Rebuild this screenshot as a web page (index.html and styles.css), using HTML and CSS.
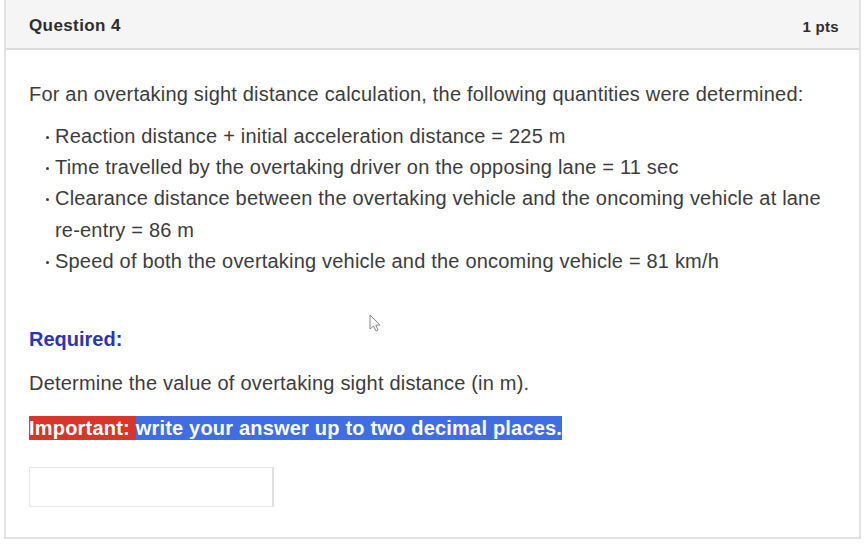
FILE: index.html
```html
<!DOCTYPE html>
<html>
<head>
<meta charset="utf-8">
<link rel="stylesheet" href="styles.css">
</head>
<body>
<div class="card">
  <div class="header">
    <span class="qtitle">Question 4</span>
    <span class="pts">1 pts</span>
  </div>
  <div class="content">
    <p class="intro">For an overtaking sight distance calculation, the following quantities were determined:</p>
    <ul class="list">
      <li>Reaction distance + initial acceleration distance = 225 m</li>
      <li>Time travelled by the overtaking driver on the opposing lane = 11 sec</li>
      <li>Clearance distance between the overtaking vehicle and the oncoming vehicle at lane re-entry = 86 m</li>
      <li>Speed of both the overtaking vehicle and the oncoming vehicle = 81 km/h</li>
    </ul>
    <p class="required">Required:</p>
    <p class="task">Determine the value of overtaking sight distance (in m).</p>
    <p class="important"><span class="red">Important: </span><span class="blue">write your answer up to two decimal places.</span></p>
    <div class="answer"></div>
  </div>
  <svg class="cursor" width="14" height="20" viewBox="0 0 14 20"><path d="M1 1 L1 15 L4.5 12 L7 17 L9 16 L6.8 11.2 L11 11 Z" fill="#fff" stroke="#888" stroke-width="1"/></svg>
</div>
</body>
</html>
```
FILE: styles.css
```css
html, body {
  margin: 0;
  padding: 0;
  background: #fff;
}
body {
  font-family: "Liberation Sans", Arial, sans-serif;
  color: #3c3c3c;
  width: 868px;
  height: 550px;
  overflow: hidden;
}
.card {
  position: relative;
  margin-left: 4px;
  width: 857px;
  height: 539px;
  border-left: 2px solid #e2e2e2;
  border-right: 2px solid #e2e2e2;
  border-bottom: 2px solid #e2e2e2;
  box-sizing: border-box;
}
.header {
  height: 50px;
  background: #f5f5f5;
  border-bottom: 2px solid #dcdcdc;
  box-sizing: border-box;
  display: flex;
  justify-content: space-between;
  align-items: center;
  padding: 0 20px 0 23px;
  font-weight: bold;
  color: #2d2d2d;
}
.header span {
  position: relative;
  top: 2px;
}
.qtitle {
  font-size: 17px;
  letter-spacing: 0.4px;
}
.pts {
  font-size: 15px;
  letter-spacing: 0.3px;
}
.content {
  padding: 24px 20px 0 23px;
  font-size: 20px;
  letter-spacing: 0.2px;
}
.content p {
  margin: 0;
}
.intro {
  line-height: 40px;
}
.list {
  margin: 7px 0 0 0;
  padding-left: 26px;
  line-height: 31.2px;
  list-style: none;
}
.list li {
  position: relative;
}
.list li::before {
  content: "";
  position: absolute;
  left: -9px;
  top: 15px;
  width: 3px;
  height: 3px;
  background: #3c3c3c;
  border-radius: 50%;
}
.required {
  margin-top: 47px !important;
  font-weight: bold;
  color: #2a35b5;
  line-height: 30px;
  letter-spacing: 0;
}
.task {
  margin-top: 14px !important;
  line-height: 30px;
}
.important {
  margin-top: 15px !important;
  line-height: 30px;
  font-weight: bold;
  color: #fff;
  letter-spacing: 0.2px;
}
.red {
  background: #d8352b;
  padding: 1px 0;
}
.blue {
  background: #3f6de4;
  padding: 1px 0;
}
.answer {
  margin-top: 24px;
  width: 245px;
  height: 40px;
  border: 1px solid #e6e6e6;
  border-right: 2px solid #e0e0e0;
  box-sizing: border-box;
}
.cursor {
  position: absolute;
  left: 363px;
  top: 314px;
}
```
